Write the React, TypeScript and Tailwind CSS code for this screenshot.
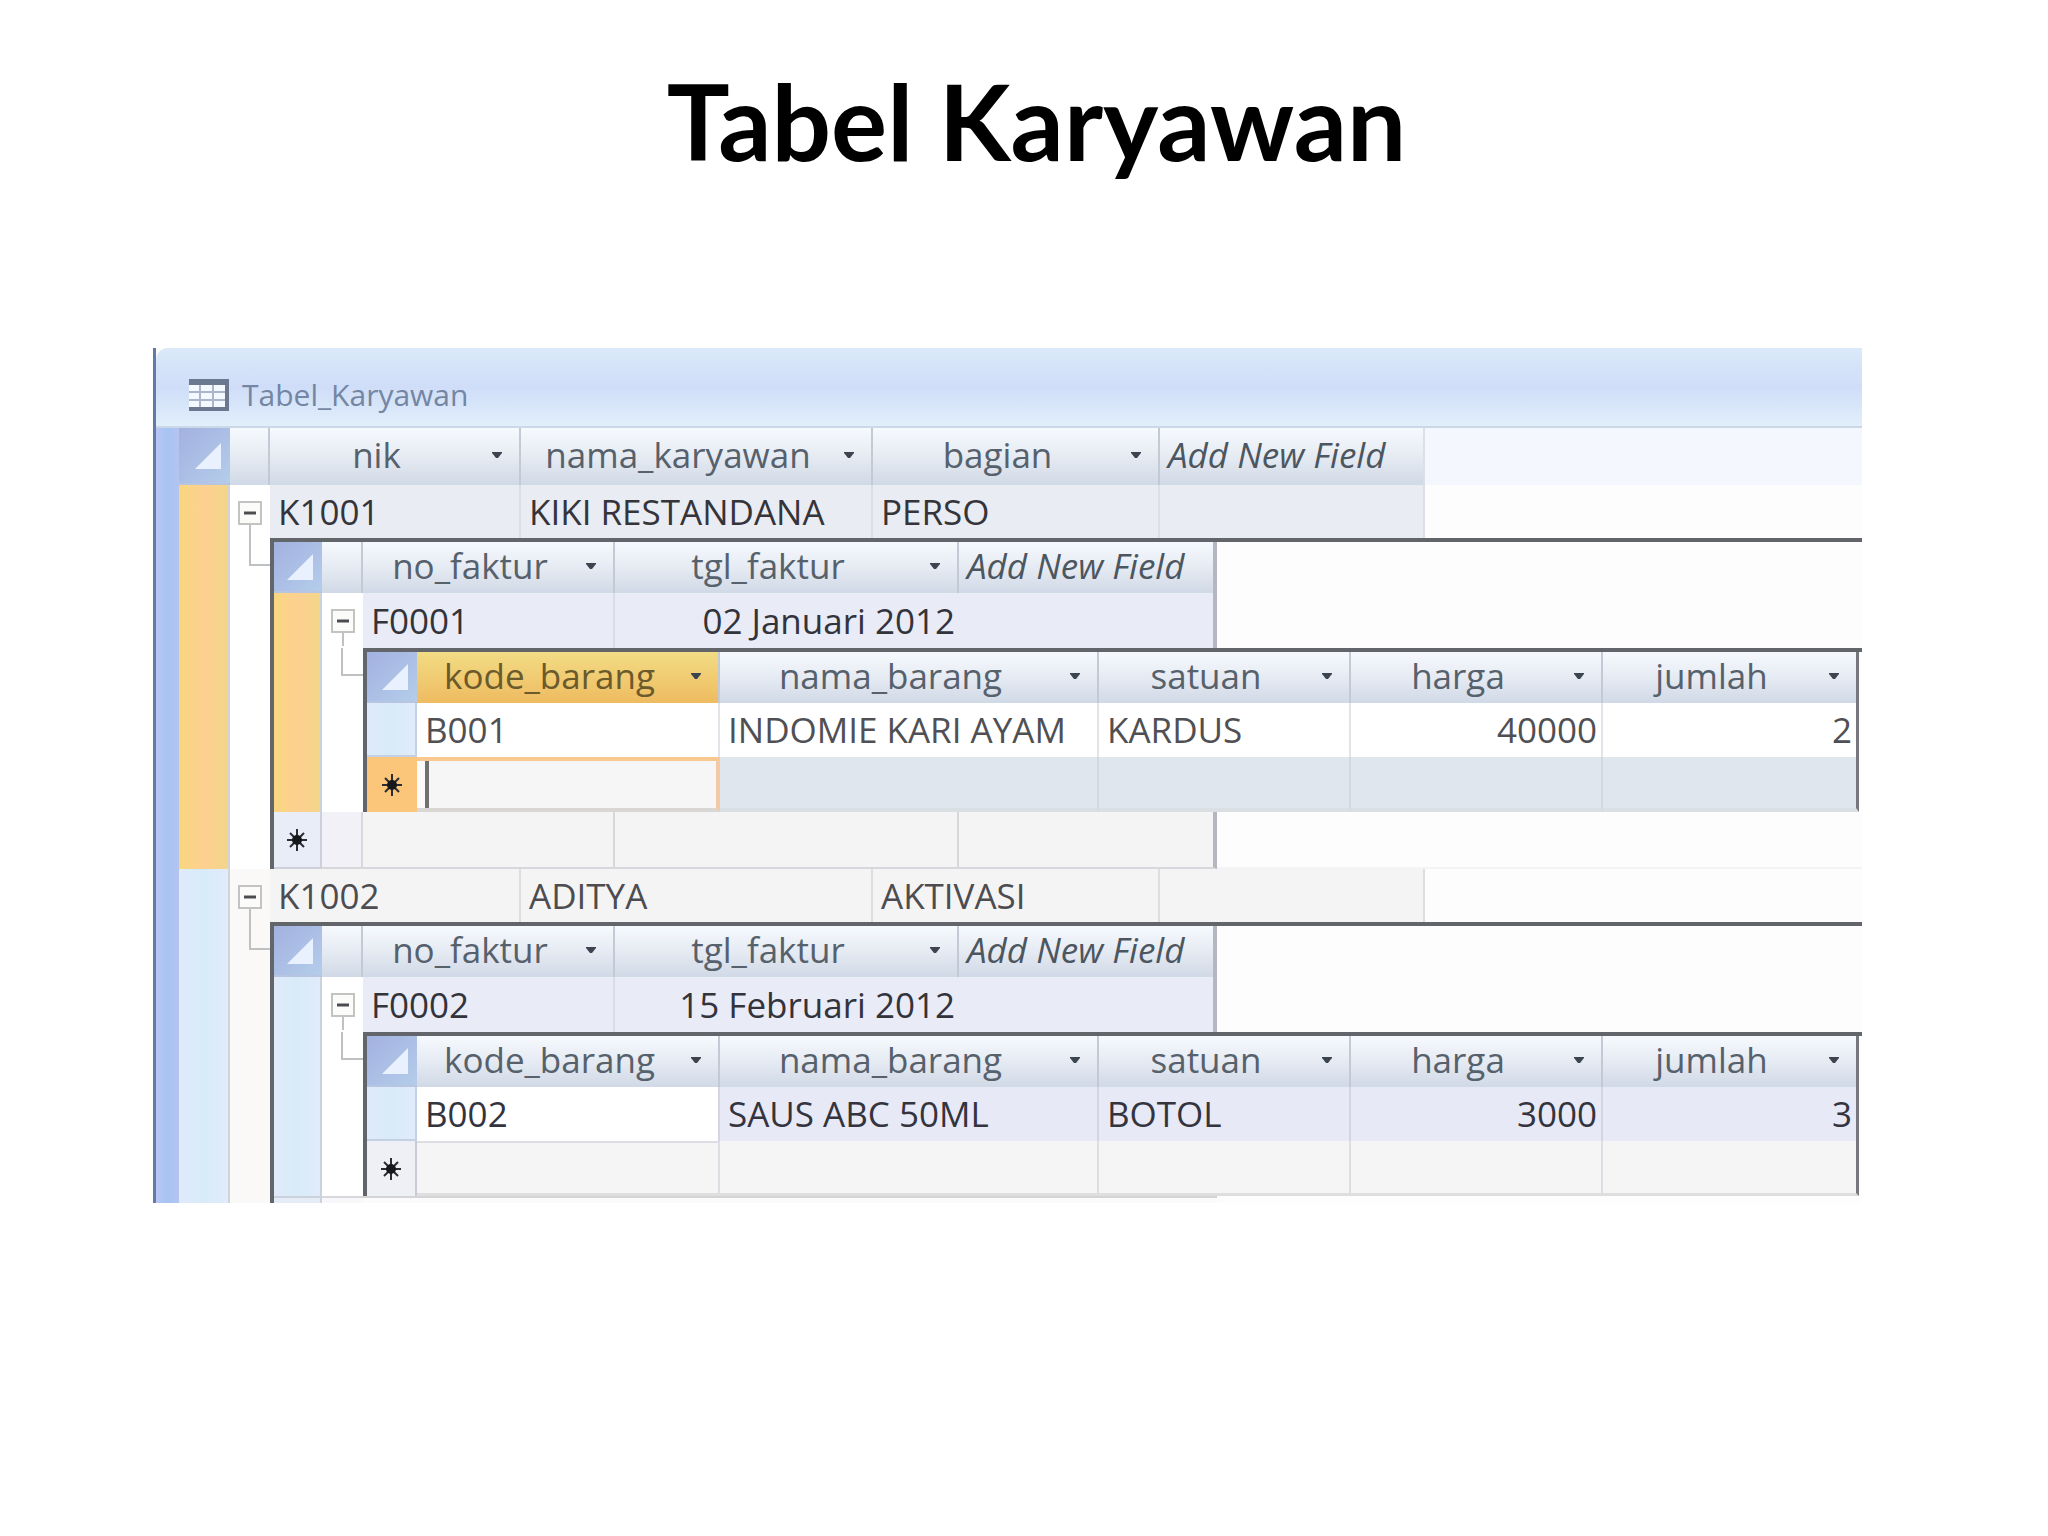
import { ReactNode } from "react";

interface Barang {
  kode: string;
  nama: string;
  satuan: string;
  harga: number;
  jumlah: number;
}

interface Karyawan {
  nik: string;
  nama: string;
  bagian: string;
  faktur: { no: string; tanggal: string; barang: Barang };
  active: boolean;
}

const karyawan: Karyawan[] = [
  {
    nik: 'K1001',
    nama: 'KIKI RESTANDANA',
    bagian: 'PERSO',
    faktur: {
      no: 'F0001',
      tanggal: '02 Januari 2012',
      barang: { kode: 'B001', nama: 'INDOMIE KARI AYAM', satuan: 'KARDUS', harga: 40000, jumlah: 2 },
    },
    active: true,
  },
  {
    nik: 'K1002',
    nama: 'ADITYA',
    bagian: 'AKTIVASI',
    faktur: {
      no: 'F0002',
      tanggal: '15 Februari 2012',
      barang: { kode: 'B002', nama: 'SAUS ABC 50ML', satuan: 'BOTOL', harga: 3000, jumlah: 3 },
    },
    active: false,
  },
];

const tableClass = 'w-full table-fixed border-separate border-spacing-0 text-left';
const headBg = 'bg-linear-to-b from-[#f6fafe] via-[#e6ebf3] to-[#d0d9e6]';
const activeSelector = 'bg-linear-to-r from-[#f8d77f] via-[#fdd090] to-[#f3d68a]';
const blueSelector = 'bg-linear-to-r from-[#e0eafa] via-[#d7ebf8] to-[#e2ebfb]';

const HeaderCell = ({ name, selected = false, last = false }: { name: string, selected?: boolean, last?: boolean }) => (
  <th className={`p-0 pb-1 font-normal ${last ? 'border-r-3 border-[#77787e]' : 'border-r-2 border-[#c3cad6]'} ${selected ? 'bg-linear-to-b from-[#f2dc84] to-[#eebb60] text-[#6b5a2c]' : `${headBg} text-[#56616c]`}`}>
    <div className="flex items-center">
      <span className="flex-1 text-center">{name}</span>
      <button type="button" aria-label={`Filter ${name}`} className="w-9 pl-2">
        <svg width="12" height="8" viewBox="0 0 12 8"><path d="M1 1h10v1L7 7H5L1 2z" fill="#3c444f" /></svg>
      </button>
    </div>
  </th>
);

const AddFieldCell = ({ strong = false }: { strong?: boolean }) => (
  <th className={`p-0 pb-1 pl-2 font-normal italic whitespace-nowrap text-[#4c5660] ${headBg} ${strong ? 'border-r-4 border-[#b4b7c1]' : 'border-r-2 border-[#dcdfe8]'}`}>
    Add New Field
  </th>
);

const CornerCell = () => (
  <th className="border-b-2 border-[#b7c5e2] bg-linear-to-br from-[#a3b1e0] to-[#b4cdea] p-0">
    <button type="button" aria-label="Select all" className="flex w-full justify-end pr-2">
      <svg width="28" height="28" viewBox="0 0 28 28"><path d="M27 1v26H1z" fill="#e8f1fd" /></svg>
    </button>
  </th>
);

const Cell = ({ children, className = '' }: { children?: ReactNode, className?: string }) => (
  <td className={`border-r-2 p-0 px-2 whitespace-nowrap ${className}`}>{children}</td>
);

const ExpanderCell = ({ label, className = '' }: { label: string, className?: string }) => (
  <td className={`p-0 align-top ${className}`}>
    <div className="flex h-[53px] flex-col items-center pt-4">
      <button type="button" aria-label={`Collapse ${label}`} className="h-6 w-6">
        <svg width="24" height="24" viewBox="0 0 24 24">
          <rect x="1" y="1" width="22" height="22" fill="#fbfbf9" stroke="#c3c4c2" strokeWidth="2" />
          <path d="M6 12h12" stroke="#4a4c50" strokeWidth="3" />
        </svg>
      </button>
      <span className="w-[2px] flex-1 bg-[#bfc0c2]"></span>
    </div>
  </td>
);

// elbow that ties the record to its subdatasheet
const BranchCell = ({ className = '' }: { className?: string }) => (
  <td className={`p-0 align-top ${className}`}>
    <div className="ml-[19px] h-7 border-b-2 border-l-2 border-[#bfc0c2]"></div>
  </td>
);

const NewRecordMark = () => (
  <svg className="mx-auto" width="24" height="24" viewBox="0 0 24 24">
    <path d="M12 1v22M2 12h20M5 5l14 14M19 5L5 19" stroke="#2b2d33" strokeWidth="2" />
    <circle cx="12" cy="12" r="5" fill="#17181c" />
  </svg>
);

const BarangSheet = ({ barang, active }: { barang: Barang, active: boolean }) => {
  const row = active ? 'bg-white border-[#e3e4ea] text-[#505054]' : 'bg-[#e7eaf6] border-[#d3d6e2] text-[#34343e]';
  const blank = active ? 'bg-[#dfe6ee] border-[#d2d9e3] border-b-4 border-b-[#dadfe3]' : 'bg-[#f5f5f5] border-[#dddee3] border-b-3 border-b-[#dedede]';

  return (
    <div className="border-t-4 border-l-4 border-[#626569]">
      <table className={tableClass}>
        <colgroup>
          <col className="w-[50px]" />
          <col className="w-[303px]" />
          <col className="w-[379px]" />
          <col className="w-[252px]" />
          <col className="w-[252px]" />
          <col />
          <col className="w-[3px]" />
        </colgroup>
        <thead>
          <tr className="h-[51px]">
            <CornerCell />
            <HeaderCell name="kode_barang" selected={active} />
            <HeaderCell name="nama_barang" />
            <HeaderCell name="satuan" />
            <HeaderCell name="harga" />
            <HeaderCell name="jumlah" last />
            <th className="p-0"></th>
          </tr>
        </thead>
        <tbody>
          <tr className="h-[54px]">
            <td className={`border-r-2 border-b-2 border-[#c4d0e4] p-0 ${blueSelector}`}></td>
            <Cell className={active ? row : 'border-[#d3d6e2] bg-white text-[#34343e]'}>{barang.kode}</Cell>
            <Cell className={row}>{barang.nama}</Cell>
            <Cell className={row}>{barang.satuan}</Cell>
            <td className={`border-r-2 p-0 pr-1 text-right ${row}`}>{barang.harga}</td>
            <td className={`border-r-3 p-0 pr-1 text-right ${row} border-r-[#77787e]`}>{barang.jumlah}</td>
            <td className="p-0"></td>
          </tr>
          <tr className="h-[55px]">
            <td className={`p-0 ${active ? 'bg-[#fcc67a]' : 'border-r-2 border-[#c9cbd4] bg-[#eff0f6]'}`}><NewRecordMark /></td>
            {active ?
              <td className="border-t-4 border-r-4 border-b-4 border-t-[#f9c88f] border-r-[#f3c9a6] border-b-[#d9d7d3] bg-[#fafafa] p-0 pl-2">
                <input aria-label="kode_barang" className="block h-[47px] w-full border-l-4 border-[#707070] bg-[#f7f6f6] px-1 outline-none" />
              </td>
              :
              <Cell className={`border-t-2 ${blank}`} />
            }
            <Cell className={blank} />
            <Cell className={blank} />
            <Cell className={blank} />
            <td className={`border-r-3 p-0 ${blank} border-r-[#77787e]`}></td>
            <td className="p-0"></td>
          </tr>
        </tbody>
      </table>
    </div>
  );
}

const FakturSheet = ({ data }: { data: Karyawan }) => {
  const { faktur, active } = data;
  const selector = active ? activeSelector : blueSelector;
  const row = 'bg-[#e9ebf6] border-[#d9dce6] text-[#32333b]';
  const blank = 'bg-[#f5f4f5] border-[#d8d8dc] border-b-2';

  return (
    <div className="border-t-4 border-l-4 border-[#626569]">
      <table className={tableClass}>
        <colgroup>
          <col className="w-[48px]" />
          <col className="w-[41px]" />
          <col className="w-[252px]" />
          <col className="w-[344px]" />
          <col className="w-[258px]" />
          <col />
        </colgroup>
        <thead>
          <tr className="h-[51px]">
            <CornerCell />
            <th className={`border-r-2 border-[#c3cad6] p-0 ${headBg}`}></th>
            <HeaderCell name="no_faktur" />
            <HeaderCell name="tgl_faktur" />
            <AddFieldCell strong />
            <th className="p-0"></th>
          </tr>
        </thead>
        <tbody>
          <tr className="h-[55px]">
            <td className={`border-r-2 border-[#cbd2dc] p-0 ${selector}`}></td>
            <ExpanderCell label={faktur.no} className="bg-white" />
            <Cell className={row}>{faktur.no}</Cell>
            <td className={`p-0 pr-1 text-right ${row}`}>{faktur.tanggal}</td>
            <td className={`border-r-4 p-0 ${row} border-r-[#b4b7c1]`}></td>
            <td className="p-0"></td>
          </tr>
          <tr>
            <td className={`border-r-2 border-[#cbd2dc] p-0 ${selector}`}></td>
            <BranchCell className="bg-white" />
            <td colSpan={4} className="p-0">
              <BarangSheet barang={faktur.barang} active={active} />
            </td>
          </tr>
          {active ?
            <tr className="h-[57px]">
              <td className="border-r-2 border-b-2 border-[#ccd0da] bg-[#e9edf7] p-0"><NewRecordMark /></td>
              <td className="border-r-2 border-b-2 border-[#d8d8dc] bg-[#f1f1f7] p-0"></td>
              <Cell className={blank} />
              <Cell className={blank} />
              <td className={`border-r-4 p-0 ${blank} border-r-[#b4b7c1]`}></td>
              <td className="border-b-2 border-[#f4f4f6] p-0"></td>
            </tr>
            :
            <tr className="h-[7px]">
              <td className="border-t-2 border-r-2 border-[#cbd2dc] bg-[#e4ecf8] p-0"></td>
              <td className="border-t-2 border-[#d8d8dc] bg-[#f8f8fb] p-0"></td>
              <td colSpan={3} className="border-t-2 border-[#d4d4d6] bg-[#fbfbfb] p-0"></td>
              <td className="p-0"></td>
            </tr>
          }
        </tbody>
      </table>
    </div>
  );
}

const KaryawanRows = ({ data }: { data: Karyawan }) => {
  const selector = data.active ? activeSelector : blueSelector;
  const row = data.active ? 'bg-[#e9ecf3] border-[#dcdfe8] text-[#34343a]' : 'bg-[#f5f4f5] border-[#dedee2] text-[#4c4c51]';
  const gutter = data.active ? 'bg-white' : 'bg-[#fbf8f8]';

  return (
    <>
      <tr className="h-[53px]">
        <td className={`border-r-2 border-[#cfd3da] p-0 ${selector}`}></td>
        <ExpanderCell label={data.nik} className={gutter} />
        <Cell className={row}>{data.nik}</Cell>
        <Cell className={row}>{data.nama}</Cell>
        <Cell className={row}>{data.bagian}</Cell>
        <Cell className={row} />
        <td className="p-0"></td>
      </tr>
      <tr>
        <td className={`border-r-2 border-[#cfd3da] p-0 ${selector}`}></td>
        <BranchCell className={gutter} />
        <td colSpan={5} className="p-0">
          <FakturSheet data={data} />
        </td>
      </tr>
    </>
  );
}

export default function App() {
  return (
    <main className="min-h-screen bg-white pt-[62px] pr-[186px] pl-[153px] font-['Open_Sans','Liberation_Sans',sans-serif]">
      <h1 className="pl-[58px] text-center font-['Lato','Liberation_Sans',sans-serif] text-[105px] leading-[116px] font-bold text-black">Tabel Karyawan</h1>

      <section className="mt-[170px] overflow-hidden border-l-3 border-[#5f7ba6] bg-[#fdfdfe]">
        <header className="flex h-20 items-center gap-3 rounded-tl-xl border-b-2 border-[#cbd8e8] bg-linear-to-b from-[#dbe9fa] via-[#cfddf8] to-[#e1effb] pt-4 pl-8 text-[#7486a3]">
          <svg width="42" height="34" viewBox="0 0 42 34">
            <path d="M1 1h40v32H1z" fill="#6c7890" />
            <path d="M1 7h36v22H1z" fill="#f4f8ff" />
            <path d="M12 7v22M25 7v22M1 14h36M1 22h36" stroke="#a9b6cc" strokeWidth="2" />
          </svg>
          <h2 className="text-[30px] leading-8">Tabel_Karyawan</h2>
        </header>

        <div className="flex">
          <div className="w-[23px] shrink-0 bg-linear-to-r from-[#b9c6f6] via-[#a6c4f3] to-[#b4c4ef]"></div>
          <table className={`${tableClass} text-[35px] leading-9`}>
            <colgroup>
              <col className="w-[51px]" />
              <col className="w-[40px]" />
              <col className="w-[251px]" />
              <col className="w-[352px]" />
              <col className="w-[287px]" />
              <col className="w-[265px]" />
              <col />
            </colgroup>
            <thead>
              <tr className="h-[57px]">
                <CornerCell />
                <th className={`border-r-2 border-[#c3cad6] p-0 ${headBg}`}></th>
                <HeaderCell name="nik" />
                <HeaderCell name="nama_karyawan" />
                <HeaderCell name="bagian" />
                <AddFieldCell />
                <th className="bg-[#f5f7fe] p-0"></th>
              </tr>
            </thead>
            <tbody>
              {karyawan.map((data) => <KaryawanRows key={data.nik} data={data} />)}
            </tbody>
          </table>
        </div>
      </section>
    </main>
  )
}
